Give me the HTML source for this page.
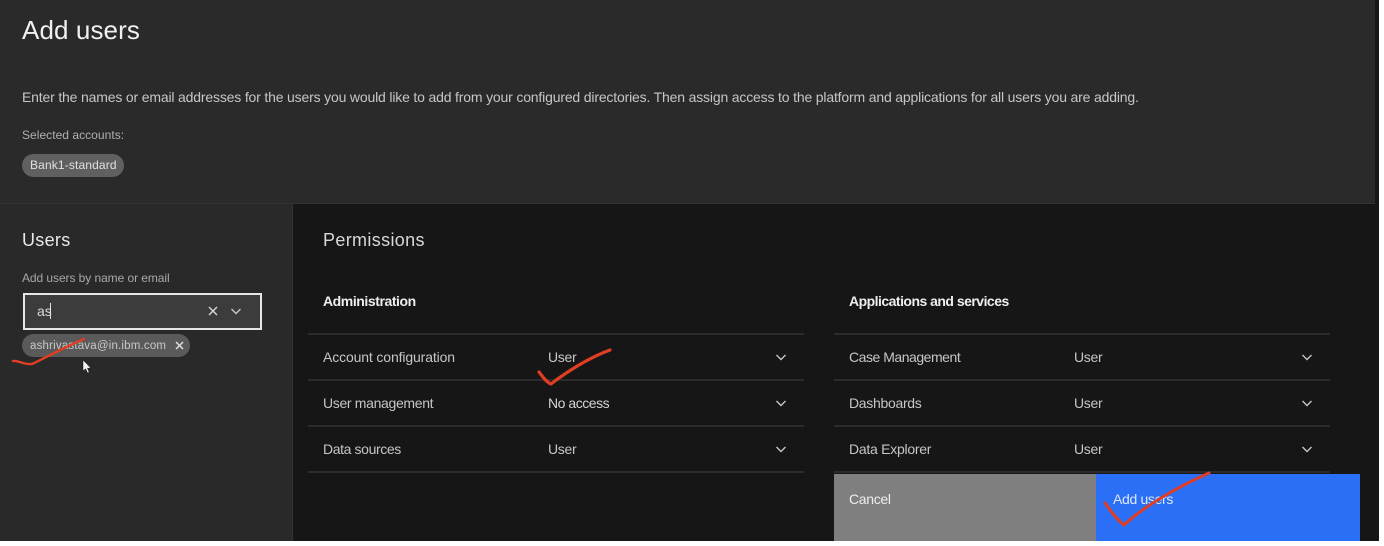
<!DOCTYPE html>
<html><head><meta charset="utf-8"><style>
html,body{margin:0;padding:0;background:#fff}
#p{position:relative;width:1384px;height:546px;overflow:hidden;background:#fff;font-family:"Liberation Sans",sans-serif}
#a{position:absolute;left:0;top:0;width:1379px;height:541px;background:#161616;overflow:hidden}
.b{position:absolute}
.t{position:absolute;white-space:nowrap;line-height:1;filter:blur(.35px)}
.r{font-size:14px;color:#c6c6c6}
.l{position:absolute;height:2px;background:#2b2b2b}
svg{position:absolute;overflow:visible}
</style></head><body><div id="p"><div id="a">
<div class="b" style="left:0;top:0;width:1375px;height:203px;background:#2a2a2a"></div>
<div class="b" style="left:0;top:203px;width:1375px;height:1px;background:#333"></div>
<div class="b" style="left:0;top:204px;width:292px;height:337px;background:#292929"></div>
<div class="b" style="left:292px;top:204px;width:1px;height:337px;background:#333"></div>

<div class="t" style="left:22px;top:17px;font-size:26px;color:#f0f0f0;letter-spacing:.1px">Add users</div>
<div class="t" style="left:22px;top:90px;font-size:14px;color:#c6c6c6;letter-spacing:-.17px">Enter the names or email addresses for the users you would like to add from your configured directories. Then assign access to the platform and applications for all users you are adding.</div>
<div class="t" style="left:22px;top:129px;font-size:12px;color:#b0b0b0;letter-spacing:.04px">Selected accounts:</div>
<div class="b" style="left:22px;top:154px;width:102px;height:23px;border-radius:12px;background:#606060"></div>
<div class="t" style="left:30px;top:159px;font-size:12px;color:#e0e0e0;letter-spacing:.14px">Bank1-standard</div>

<div class="t" style="left:22px;top:231px;font-size:18px;color:#e8e8e8;letter-spacing:.3px">Users</div>
<div class="t" style="left:22px;top:272px;font-size:12px;color:#a8a8a8;letter-spacing:-.07px">Add users by name or email</div>
<div class="b" style="left:23px;top:293px;width:235px;height:33px;background:#3c3c3c;border:2px solid #e6e6e6"></div>
<div class="t" style="left:37px;top:304px;font-size:14px;color:#d8d8d8">as</div>
<div class="b" style="left:50px;top:303px;width:1px;height:16px;background:#e0e0e0"></div>
<svg style="left:208px;top:306px" width="10" height="10"><path d="M1 1L9 9M9 1L1 9" stroke="#d8d8d8" stroke-width="1.4" fill="none"/></svg>
<svg style="left:231px;top:308px" width="10" height="7"><path d="M.5 1L5 5.5L9.5 1" stroke="#c6c6c6" stroke-width="1.4" fill="none"/></svg>
<div class="b" style="left:22px;top:334px;width:168px;height:23px;border-radius:12px;background:#5a5a5a"></div>
<div class="t" style="left:30px;top:341px;font-size:11.5px;color:#c8c8c8;letter-spacing:.19px">ashrivastava@in.ibm.com</div>
<svg style="left:175px;top:341px" width="9" height="9"><path d="M1 1L8 8M8 1L1 8" stroke="#e0e0e0" stroke-width="1.5" fill="none"/></svg>

<div class="t" style="left:323px;top:231px;font-size:18px;color:#d8d8d8;letter-spacing:.35px">Permissions</div>
<div class="t" style="left:323px;top:294px;font-size:14px;font-weight:700;color:#eee;letter-spacing:-.43px">Administration</div>
<div class="t" style="left:849px;top:294px;font-size:14px;font-weight:700;color:#eee;letter-spacing:-.52px">Applications and services</div>

<div class="l" style="left:308px;top:333px;width:496px"></div>
<div class="l" style="left:308px;top:379px;width:496px"></div>
<div class="l" style="left:308px;top:425px;width:496px"></div>
<div class="l" style="left:308px;top:471px;width:496px"></div>
<div class="l" style="left:834px;top:333px;width:496px"></div>
<div class="l" style="left:834px;top:379px;width:496px"></div>
<div class="l" style="left:834px;top:425px;width:496px"></div>
<div class="l" style="left:834px;top:471px;width:496px"></div>

<div class="t r" style="left:323px;top:350px;letter-spacing:-.13px">Account configuration</div>
<div class="t r" style="left:323px;top:396px;letter-spacing:-.33px">User management</div>
<div class="t r" style="left:323px;top:442px;letter-spacing:-.38px">Data sources</div>
<div class="t r" style="left:548px;top:350px;letter-spacing:-.3px">User</div>
<div class="t r" style="left:548px;top:396px;color:#d4d4d4;letter-spacing:-.47px">No access</div>
<div class="t r" style="left:548px;top:442px;letter-spacing:-.3px">User</div>
<div class="t r" style="left:849px;top:350px;letter-spacing:-.47px">Case Management</div>
<div class="t r" style="left:849px;top:396px;letter-spacing:-.3px">Dashboards</div>
<div class="t r" style="left:849px;top:442px;letter-spacing:-.26px">Data Explorer</div>
<div class="t r" style="left:1074px;top:350px;letter-spacing:-.3px">User</div>
<div class="t r" style="left:1074px;top:396px;letter-spacing:-.3px">User</div>
<div class="t r" style="left:1074px;top:442px;letter-spacing:-.3px">User</div>

<svg style="left:0;top:0" width="1379" height="541" fill="none" stroke="#c6c6c6" stroke-width="1.4">
<path d="M776.5 355L781 359.5L785.5 355M776.5 401L781 405.5L785.5 401M776.5 447L781 451.5L785.5 447M1302.5 355L1307 359.5L1311.5 355M1302.5 401L1307 405.5L1311.5 401M1302.5 447L1307 451.5L1311.5 447"/>
</svg>

<div class="b" style="left:834px;top:474px;width:262px;height:67px;background:#7f7f7f"></div>
<div class="b" style="left:1096px;top:474px;width:264px;height:67px;background:#2a6ff5"></div>
<div class="t" style="left:849px;top:492px;font-size:14px;color:#eee;letter-spacing:-.33px">Cancel</div>
<div class="t" style="left:1113px;top:492px;font-size:14px;color:#dde8ff;letter-spacing:-.33px">Add users</div>

<svg style="left:0;top:0" width="1379" height="541" fill="none" stroke="#e03e24" stroke-linecap="round" stroke-linejoin="round">
<path stroke-width="2.4" d="M13 361C19 360 23 365 32 364C45 358 65 347 84 339"/>
<path stroke-width="3.2" d="M539 372C542 376 546 382 551 384C565 373 588 358 610 350"/>
<path stroke-width="3" d="M1105 503C1110 510 1117 520 1124 525C1142 508 1175 488 1209 473"/>
</svg>
<svg style="left:83px;top:360px" width="9" height="14"><path d="M0 0L0 11L2.6 8.8L4.6 13L6.2 12.2L4.4 8.2L7.8 8Z" fill="#f4f4f4" stroke="#111" stroke-width=".5"/></svg>
</div></div></body></html>
